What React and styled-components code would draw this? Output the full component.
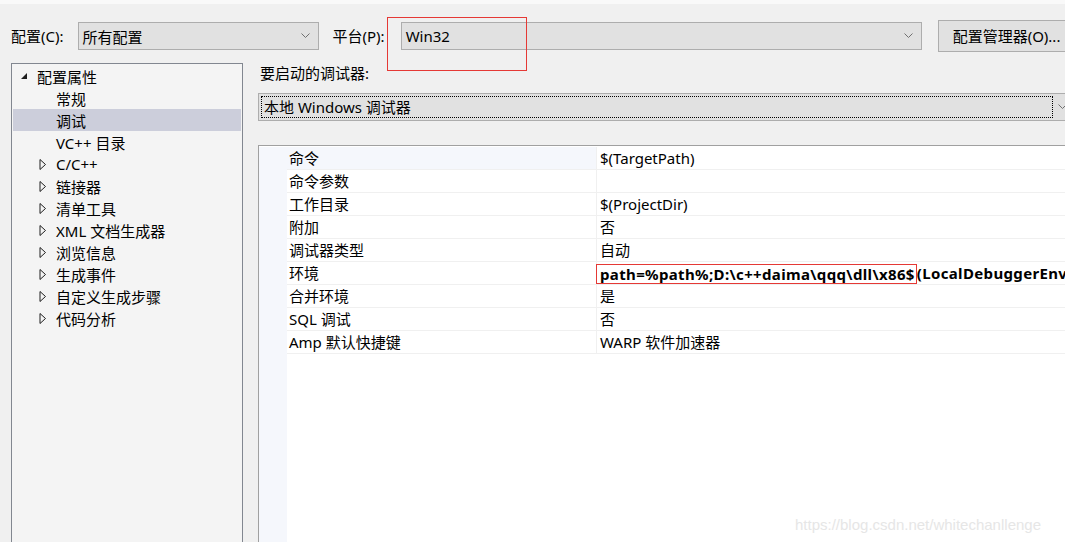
import React from 'react';
import styled, { createGlobalStyle } from 'styled-components';

const GlobalStyle = createGlobalStyle`
html, body {
    margin: 0;
    padding: 0;
    background: #f0f0f0;
}
body {
    font-family: "Noto Sans", "Noto Sans CJK SC", sans-serif;
    font-size: 15px;
    color: #000;
}
`;

const Page = styled.div`
position: relative;
width: 1065px;
height: 542px;
overflow: hidden;
background: #f0f0f0;
border-top: 4px solid #f9f9f9;
box-sizing: border-box;
`;

const Toolbar = styled.div`
display: flex;
align-items: center;
height: 28px;
padding: 18px 0 0 11px;
white-space: nowrap;
`;

const Label = styled.span`
line-height: 20px;
margin-right: ${p => p.gap || 14}px;
`;

const Combo = styled.div`
flex: none;
display: flex;
align-items: center;
justify-content: space-between;
box-sizing: border-box;
width: ${p => p.width}px;
height: 28px;
margin-right: ${p => p.after || 0}px;
padding: 0 8px 0 4px;
background: #e1e1e1;
border: 1px solid #adadad;
`;

const Chevron = () => (
    <svg width="9" height="6" viewBox="0 0 9 6">
        <polyline points="0.5,0.5 4.5,4.5 8.5,0.5" fill="none" stroke="#707070" strokeWidth="1" />
    </svg>
);

const Button = styled.div`
flex: none;
box-sizing: border-box;
width: 150px;
height: 32px;
padding: 0 14px;
line-height: 30px;
background: #e1e1e1;
border: 1px solid #adadad;
`;

const Body = styled.div`
display: flex;
gap: 15px;
padding: 13px 0 0 11px;
`;

const TreePanel = styled.div`
flex: none;
box-sizing: border-box;
width: 232px;
height: 500px;
padding: 1px;
background: #f4f4f4;
border: 1px solid #828790;
`;

const TreeRow = styled.div`
display: flex;
align-items: center;
height: 22px;
padding-left: ${p => p.indent}px;
background: ${p => (p.selected ? '#cccedb' : 'transparent')};
white-space: nowrap;
`;

const Glyph = styled.span`
display: inline-flex;
width: ${p => p.w}px;
justify-content: flex-start;
`;

const Expanded = () => (
    <svg width="8" height="8" viewBox="0 0 8 8">
        <polygon points="7,1 7,7 1,7" fill="#1e1e1e" />
    </svg>
);

const Collapsed = () => (
    <svg width="8" height="11" viewBox="0 0 8 11">
        <polygon points="1,0.5 6.5,5.5 1,10.5" fill="none" stroke="#1e1e1e" strokeWidth="1" />
    </svg>
);

const RightPane = styled.div`
flex: 1;
min-width: 0;
display: flex;
flex-direction: column;
`;

const Caption = styled.div`
height: 20px;
line-height: 20px;
padding-left: 2px;
`;

const DebugCombo = styled.div`
display: flex;
align-items: center;
gap: 5px;
box-sizing: border-box;
width: 830px;
height: 28px;
margin-top: 10px;
padding: 2px;
background: #e1e1e1;
border: 1px solid #adadad;
`;

const FocusBox = styled.div`
flex: none;
box-sizing: border-box;
width: 792px;
height: 22px;
padding-left: 2px;
line-height: 20px;
border: 1px dotted #000;
`;

const Grid = styled.div`
display: flex;
box-sizing: border-box;
width: 830px;
height: 420px;
margin-top: 24px;
padding-top: 1px;
background: #fff;
border: 1px solid #a0a0a0;
`;

const Gutter = styled.div`
flex: none;
width: 28px;
background: #f5f7fc;
`;

const Rows = styled.div`
flex: 1;
display: flex;
flex-direction: column;
`;

const Row = styled.div`
display: flex;
height: 23px;
box-sizing: border-box;
border-bottom: 1px solid #f0f0f0;
white-space: nowrap;
`;

const NameCell = styled.div`
flex: none;
width: 310px;
box-sizing: border-box;
padding-left: 2px;
line-height: 23px;
background: ${p => (p.focus ? '#f5f7fc' : '#fff')};
border-right: 1px solid #f0f0f0;
`;

const ValueCell = styled.div`
flex: 1;
min-width: 0;
display: flex;
align-items: center;
padding-left: 3px;
line-height: 22px;
font-weight: ${p => (p.bold ? 700 : 400)};
`;

const Marked = styled.span`
flex: none;
box-sizing: border-box;
margin: 1px 0 0 -4px;
padding: 0 1px 0 3px;
height: 20px;
line-height: 18px;
letter-spacing: 0.35px;
border: 1px solid #e53935;
`;

const Rest = styled.span`
flex: none;
letter-spacing: 0.35px;
`;

const Highlight = styled.div`
position: absolute;
left: 387px;
top: 13px;
width: 140px;
height: 54px;
border: 1px solid #e53935;
box-sizing: border-box;
pointer-events: none;
`;

const Watermark = styled.div`
position: absolute;
left: 795px;
top: 512px;
font-family: "Liberation Sans", Arial, sans-serif;
font-size: 15px;
color: #e6e6e6;
white-space: nowrap;
`;

const tree = [
    { label: '配置属性', top: true },
    { label: '常规' },
    { label: '调试', selected: true },
    { label: 'VC++ 目录' },
    { label: 'C/C++', more: true },
    { label: '链接器', more: true },
    { label: '清单工具', more: true },
    { label: 'XML 文档生成器', more: true },
    { label: '浏览信息', more: true },
    { label: '生成事件', more: true },
    { label: '自定义生成步骤', more: true },
    { label: '代码分析', more: true },
];

const props = [
    ['命令', '$(TargetPath)'],
    ['命令参数', ''],
    ['工作目录', '$(ProjectDir)'],
    ['附加', '否'],
    ['调试器类型', '自动'],
    ['环境', null],
    ['合并环境', '是'],
    ['SQL 调试', '否'],
    ['Amp 默认快捷键', 'WARP 软件加速器'],
];

const TreeItem = ({ item }) => {
    if (item.top) {
        return (
            <TreeRow indent={7}>
                <Glyph w={17}><Expanded /></Glyph>
                {item.label}
            </TreeRow>
        );
    }
    return (
        <TreeRow indent={26} selected={item.selected}>
            <Glyph w={17}>{item.more ? <Collapsed /> : null}</Glyph>
            {item.label}
        </TreeRow>
    );
};

export default function App() {
    return (
        <Page>
            <GlobalStyle />
            <Toolbar>
                <Label>配置(C):</Label>
                <Combo width={241} after={14}>
                    <span>所有配置</span>
                    <Chevron />
                </Combo>
                <Label gap={16}>平台(P):</Label>
                <Combo width={521} after={16}>
                    <span>Win32</span>
                    <Chevron />
                </Combo>
                <Button>配置管理器(O)...</Button>
            </Toolbar>
            <Body>
                <TreePanel>
                    {tree.map(item => (
                        <TreeItem key={item.label} item={item} />
                    ))}
                </TreePanel>
                <RightPane>
                    <Caption>要启动的调试器:</Caption>
                    <DebugCombo>
                        <FocusBox>本地 Windows 调试器</FocusBox>
                        <Chevron />
                    </DebugCombo>
                    <Grid>
                        <Gutter />
                        <Rows>
                            {props.map(([name, value], i) => (
                                <Row key={name}>
                                    <NameCell focus={i === 0}>{name}</NameCell>
                                    {value === null ? (
                                        <ValueCell bold>
                                            <Marked>path=%path%;D:\c++daima\qqq\dll\x86$</Marked>
                                            <Rest>(LocalDebuggerEnvironment)</Rest>
                                        </ValueCell>
                                    ) : (
                                        <ValueCell>{value}</ValueCell>
                                    )}
                                </Row>
                            ))}
                        </Rows>
                    </Grid>
                </RightPane>
            </Body>
            <Highlight />
            <Watermark>https://blog.csdn.net/whitechanllenge</Watermark>
        </Page>
    );
}
